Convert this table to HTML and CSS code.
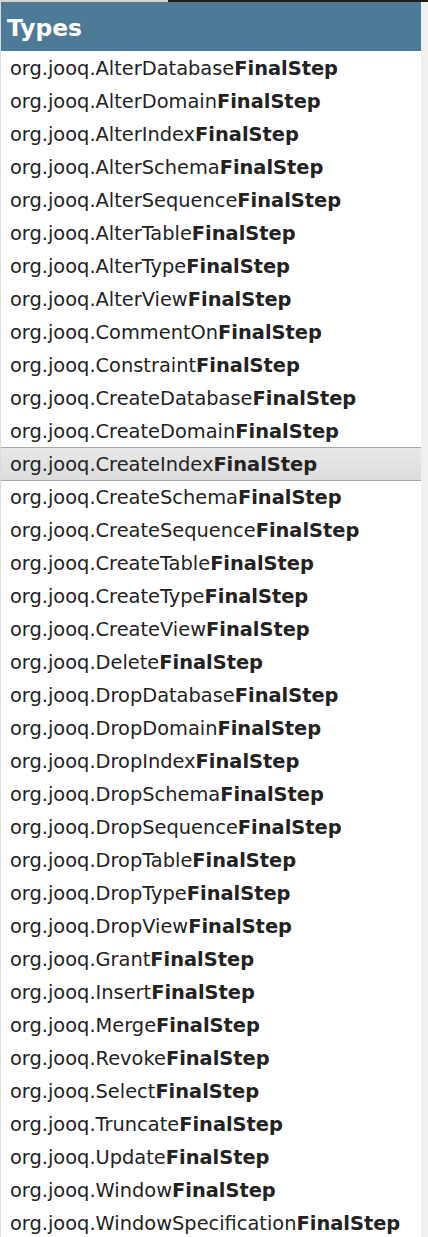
FILE: index.html
```html
<!DOCTYPE html>
<html>
<head>
<meta charset="utf-8">
<link rel="stylesheet" href="styles.css">
</head>
<body>
<div class="topbar"><div class="topbar-left"></div><div class="topbar-right"></div></div>
<div class="page">
  <div class="panel">
    <div class="header">Types</div>
    <ul class="list">
      <li>org.jooq.AlterDatabase<b>FinalStep</b></li>
      <li>org.jooq.AlterDomain<b>FinalStep</b></li>
      <li>org.jooq.AlterIndex<b>FinalStep</b></li>
      <li>org.jooq.AlterSchema<b>FinalStep</b></li>
      <li>org.jooq.AlterSequence<b>FinalStep</b></li>
      <li>org.jooq.AlterTable<b>FinalStep</b></li>
      <li>org.jooq.AlterType<b>FinalStep</b></li>
      <li>org.jooq.AlterView<b>FinalStep</b></li>
      <li>org.jooq.CommentOn<b>FinalStep</b></li>
      <li>org.jooq.Constraint<b>FinalStep</b></li>
      <li>org.jooq.CreateDatabase<b>FinalStep</b></li>
      <li>org.jooq.CreateDomain<b>FinalStep</b></li>
      <li class="active">org.jooq.CreateIndex<b>FinalStep</b></li>
      <li>org.jooq.CreateSchema<b>FinalStep</b></li>
      <li>org.jooq.CreateSequence<b>FinalStep</b></li>
      <li>org.jooq.CreateTable<b>FinalStep</b></li>
      <li>org.jooq.CreateType<b>FinalStep</b></li>
      <li>org.jooq.CreateView<b>FinalStep</b></li>
      <li>org.jooq.Delete<b>FinalStep</b></li>
      <li>org.jooq.DropDatabase<b>FinalStep</b></li>
      <li>org.jooq.DropDomain<b>FinalStep</b></li>
      <li>org.jooq.DropIndex<b>FinalStep</b></li>
      <li>org.jooq.DropSchema<b>FinalStep</b></li>
      <li>org.jooq.DropSequence<b>FinalStep</b></li>
      <li>org.jooq.DropTable<b>FinalStep</b></li>
      <li>org.jooq.DropType<b>FinalStep</b></li>
      <li>org.jooq.DropView<b>FinalStep</b></li>
      <li>org.jooq.Grant<b>FinalStep</b></li>
      <li>org.jooq.Insert<b>FinalStep</b></li>
      <li>org.jooq.Merge<b>FinalStep</b></li>
      <li>org.jooq.Revoke<b>FinalStep</b></li>
      <li>org.jooq.Select<b>FinalStep</b></li>
      <li>org.jooq.Truncate<b>FinalStep</b></li>
      <li>org.jooq.Update<b>FinalStep</b></li>
      <li>org.jooq.Window<b>FinalStep</b></li>
      <li>org.jooq.WindowSpecification<b>FinalStep</b></li>
    </ul>
  </div>
  <div class="gutter"></div>
</div>
</body>
</html>
```

FILE: styles.css
```css
html, body {
  margin: 0;
  padding: 0;
  background: #ffffff;
}
body {
  font-family: "DejaVu Sans", Verdana, sans-serif;
  color: #222222;
  width: 428px;
  height: 1237px;
  overflow: hidden;
}
.topbar {
  display: flex;
  height: 2px;
}
.topbar-left {
  width: 168px;
  background: #d4d4d4;
}
.topbar-right {
  flex: 1;
  background: #1e1e1e;
}
.page {
  display: flex;
  height: 1235px;
}
.panel {
  width: 420px;
  border-left: 1px solid #dcdcdc;
  background: #ffffff;
}
.gutter {
  flex: 1;
  background: #f0f0f0;
}
.header {
  height: 49px;
  background: #4d7a97;
  color: #ffffff;
  font-weight: bold;
  font-size: 23.4px;
  line-height: 52px;
  padding-left: 6px;
  box-sizing: border-box;
}
.list {
  list-style: none;
  margin: 1px 0 0 0;
  padding: 0;
}
.list li {
  height: 33px;
  line-height: 33px;
  font-size: 19.4px;
  padding-left: 9px;
  white-space: nowrap;
  color: #222222;
}
.list li b {
  font-weight: bold;
  color: #222222;
}
.list li.active {
  background: linear-gradient(#e8e8e8, #dcdcdc);
  box-shadow: 0 -1px 0 #a8a8a8, inset 0 -1px 0 #a8a8a8;
}
```
